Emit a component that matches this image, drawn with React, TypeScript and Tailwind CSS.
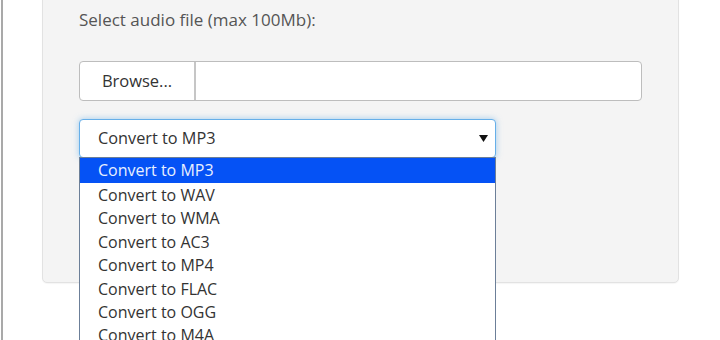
const formats = ["MP3", "WAV", "WMA", "AC3", "MP4", "FLAC", "OGG", "M4A", "AAC"];

export default function App() {
  return (
    <div
      className="relative h-[340px] w-[720px] overflow-hidden bg-white"
      style={{ fontFamily: '"Open Sans", "Noto Sans", sans-serif' }}
    >
      <div className="flex h-full">
        <div className="ml-[1px] h-full w-[2px] bg-[#a9a9a9]" />
        <div className="ml-[39px] mt-[-10px] h-[293px] w-[637px] rounded-b-[5px] border border-[#e2e2e2] bg-[#f4f4f4] pl-[36px] pt-[17px] shadow-[0_1px_1px_rgba(0,0,0,0.04)]">
          <p className="text-[17px] leading-[24px] text-[#555]">Select audio file (max 100Mb):</p>

          <div className="mt-[29px] flex h-[40px] w-[563px] rounded-[4px] border border-[#bdbdbd] bg-white">
            <button
              type="button"
              className="w-[116px] border-r-2 border-[#c6c6c6] text-[16.5px] text-[#333]"
            >
              Browse...
            </button>
            <div className="flex-1" />
          </div>

          <div className="relative mt-[18px] w-[417px]">
            <div className="flex h-[39px] items-center justify-between rounded-[4px] border border-[#66afe9] bg-white pl-[18px] pr-[7px] shadow-[0_0_6px_rgba(102,175,233,0.6)]">
              <span className="text-[16.3px] text-[#333]">Convert to MP3</span>
              <svg width="9" height="7" viewBox="0 0 9 7">
                <path d="M0 0h9L4.5 7z" fill="#111" />
              </svg>
            </div>
            <ul className="absolute left-0 top-[38px] z-10 w-[417px] border border-[#6c7f98] bg-white">
              {formats.map((f, i) => (
                <li
                  key={f}
                  className={
                    i === 0
                      ? "h-[25px] bg-[#0552f5] pl-[18px] text-[16px] leading-[24px] text-[#e8f0ff]"
                      : "h-[23.4px] pl-[18px] text-[16px] leading-[25px] text-[#333]"
                  }
                >
                  Convert to {f}
                </li>
              ))}
            </ul>
          </div>
        </div>
      </div>
    </div>
  );
}
